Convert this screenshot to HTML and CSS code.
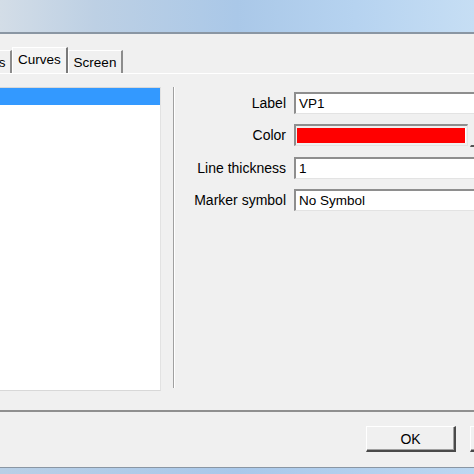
FILE: index.html
```html
<!DOCTYPE html>
<html lang="en">
<head>
  <meta charset="UTF-8">
  <title>Plot Properties</title>
  <link rel="stylesheet" href="styles.css">
</head>
<body>
  <div class="window">
    <div class="titlebar"></div>

    <div class="tabs">
      <div class="tab">Axes</div>
      <div class="tab active">Curves</div>
      <div class="tab">Screen</div>
    </div>

    <div class="page">
      <div class="curve-list">
        <div class="curve-item selected"></div>
      </div>
      <div class="vsep"></div>

      <div class="form">
        <label>Label</label>
        <div class="field">VP1</div>

        <label>Color</label>
        <div class="color-row">
          <div class="field color-field"><div class="swatch"></div></div>
          <button class="small-btn" aria-label="Choose colour"></button>
        </div>

        <label>Line thickness</label>
        <div class="field">1</div>

        <label>Marker symbol</label>
        <div class="field">No Symbol</div>
      </div>
    </div>

    <div class="footer">
      <button class="btn">OK</button>
      <button class="btn" aria-label="Cancel"></button>
    </div>

    <div class="frame-bottom"></div>
  </div>
</body>
</html>
```

FILE: styles.css
```css
/* — base — */
* { box-sizing: border-box; margin: 0; padding: 0; }
body {
  width: 474px;
  height: 474px;
  overflow: hidden;
  background: #f0f0f0;
  font-family: 'Liberation Sans', Arial, sans-serif;
  font-size: 13.5px;
  color: #000;
}

.window {
  display: flex;
  flex-direction: column;
  height: 474px;
}

/* — title bar (aero glass) — */
.titlebar {
  height: 34px;
  flex: none;
  background: linear-gradient(90deg, #d3dde7 0%, #bdd0e4 20%, #aac8e8 50%, #b6d3f0 75%, #c6def4 100%);
  border-bottom: 2px solid #8a96a3;
}

/* — tabs — */
.tabs {
  display: flex;
  align-items: flex-end;
  height: 26px;
  margin-top: 13px;
  margin-left: -30px;
  flex: none;
}
.tab {
  flex: none;
  height: 23px;
  width: 55px;
  padding-top: 4px;
  text-align: center;
  background: #f0f0f0;
  border-top: 1px solid #fff;
  border-left: 1px solid #fff;
  border-right: 2px solid #8c8c8c;
}
.tab:first-child { width: 42px; }
.tab.active {
  width: 56px;
  height: 26px;
  padding-top: 4px;
  background: #f4f4f4;
  border-right: 2px solid #7a7a7a;
}

/* — tab page — */
.page {
  flex: 1;
  display: flex;
  align-items: flex-start;
  border-top: 1px solid #fff;
  padding-top: 13px;
}
.curve-list {
  flex: none;
  width: 163px;
  height: 304px;
  margin-left: -2px;
  background: #fff;
  border: 1px solid #d8d8d8;
  border-right-color: #e2e2e2;
}
.curve-item { height: 17px; }
.curve-item.selected { background: #3399ff; }

.vsep {
  flex: none;
  width: 2px;
  height: 301px;
  margin-left: 12px;
  border-left: 1px solid #a0a0a0;
  border-right: 1px solid #fff;
}

.form {
  flex: none;
  display: grid;
  grid-template-columns: 111px 200px;
  column-gap: 8px;
  row-gap: 10px;
  margin-top: 5px;
}
.form label {
  height: 22px;
  line-height: 22px;
  text-align: right;
  font-size: 14px;
  white-space: nowrap;
}
.field {
  height: 22px;
  line-height: 19px;
  padding-left: 3px;
  background: #fff;
  border: 1px solid #e3e3e3;
  border-top: 2px solid #8e8e8e;
  border-left: 2px solid #8e8e8e;
}
.color-row {
  display: flex;
  gap: 2px;
}
.color-field {
  width: 174px;
  flex: none;
  background: #f0f0f0;
  padding: 2px 1px 2px 1px;
}
.swatch {
  height: 15px;
  background: #ff0000;
  border-right: 1px solid #fff;
}
.small-btn {
  width: 30px;
  height: 23px;
  flex: none;
  background: #f0f0f0;
  border: 1px solid #f0f0f0;
  border-bottom: 2px solid #555;
  border-right: 2px solid #555;
}

/* — footer buttons — */
.footer {
  height: 57px;
  flex: none;
  display: flex;
  justify-content: flex-end;
  gap: 14px;
  padding-top: 14px;
  margin-right: -86px;
  border-top: 2px solid #8f8f8f;
}
.btn {
  flex: none;
  width: 90px;
  height: 26px;
  font-family: 'Liberation Sans', Arial, sans-serif;
  font-size: 14px;
  background: #f0f0f0;
  border: 1px solid #fff;
  border-right: 2px solid #4a4a4a;
  border-bottom: 2px solid #4a4a4a;
  box-shadow: inset -1px -1px 0 #a0a0a0;
}

.frame-bottom {
  height: 7px;
  flex: none;
  border-top: 1px solid #8a96a3;
  background: linear-gradient(90deg, #b8cfe6, #a9c8ea 50%, #bcd7f1);
}
```
